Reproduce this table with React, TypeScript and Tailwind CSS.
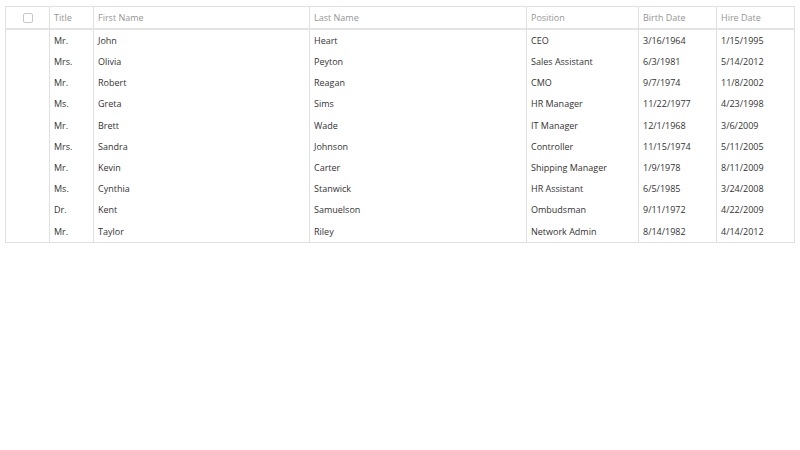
import React from "react";

const rows = [
  ["Mr.", "John", "Heart", "CEO", "3/16/1964", "1/15/1995"],
  ["Mrs.", "Olivia", "Peyton", "Sales Assistant", "6/3/1981", "5/14/2012"],
  ["Mr.", "Robert", "Reagan", "CMO", "9/7/1974", "11/8/2002"],
  ["Ms.", "Greta", "Sims", "HR Manager", "11/22/1977", "4/23/1998"],
  ["Mr.", "Brett", "Wade", "IT Manager", "12/1/1968", "3/6/2009"],
  ["Mrs.", "Sandra", "Johnson", "Controller", "11/15/1974", "5/11/2005"],
  ["Mr.", "Kevin", "Carter", "Shipping Manager", "1/9/1978", "8/11/2009"],
  ["Ms.", "Cynthia", "Stanwick", "HR Assistant", "6/5/1985", "3/24/2008"],
  ["Dr.", "Kent", "Samuelson", "Ombudsman", "9/11/1972", "4/22/2009"],
  ["Mr.", "Taylor", "Riley", "Network Admin", "8/14/1982", "4/14/2012"],
];

const headers = ["Title", "First Name", "Last Name", "Position", "Birth Date", "Hire Date"];

export default function App() {
  return (
    <div className="w-[800px] h-[450px] bg-white pt-[6px] px-[5px]" style={{ fontFamily: '"Open Sans", "Noto Sans", sans-serif' }}>
      <div className="border border-[#e0e0e0] text-[9px]">
        <div className="grid grid-cols-[43px_44px_216px_217px_112px_78px_1fr] h-[23px] border-b-2 border-[#e3e3e3] text-[#959595]">
          <div className="flex items-center justify-center">
            <div className="w-[10px] h-[10px] border border-[#c8c8c8] rounded-[2px] bg-white" />
          </div>
          {headers.map((h) => (
            <div key={h} className="flex items-center pl-[4px] border-l border-[#e0e0e0]">{h}</div>
          ))}
        </div>
        <div className="grid grid-cols-[43px_44px_216px_217px_112px_78px_1fr] text-[#333]">
          <div className="row-span-10" />
          {rows.map((r, i) =>
            r.map((c, j) => (
              <div key={i + "-" + j} className="h-[21.2px] flex items-center pl-[4px] border-l border-[#e0e0e0]">{c}</div>
            ))
          )}
        </div>
      </div>
    </div>
  );
}
